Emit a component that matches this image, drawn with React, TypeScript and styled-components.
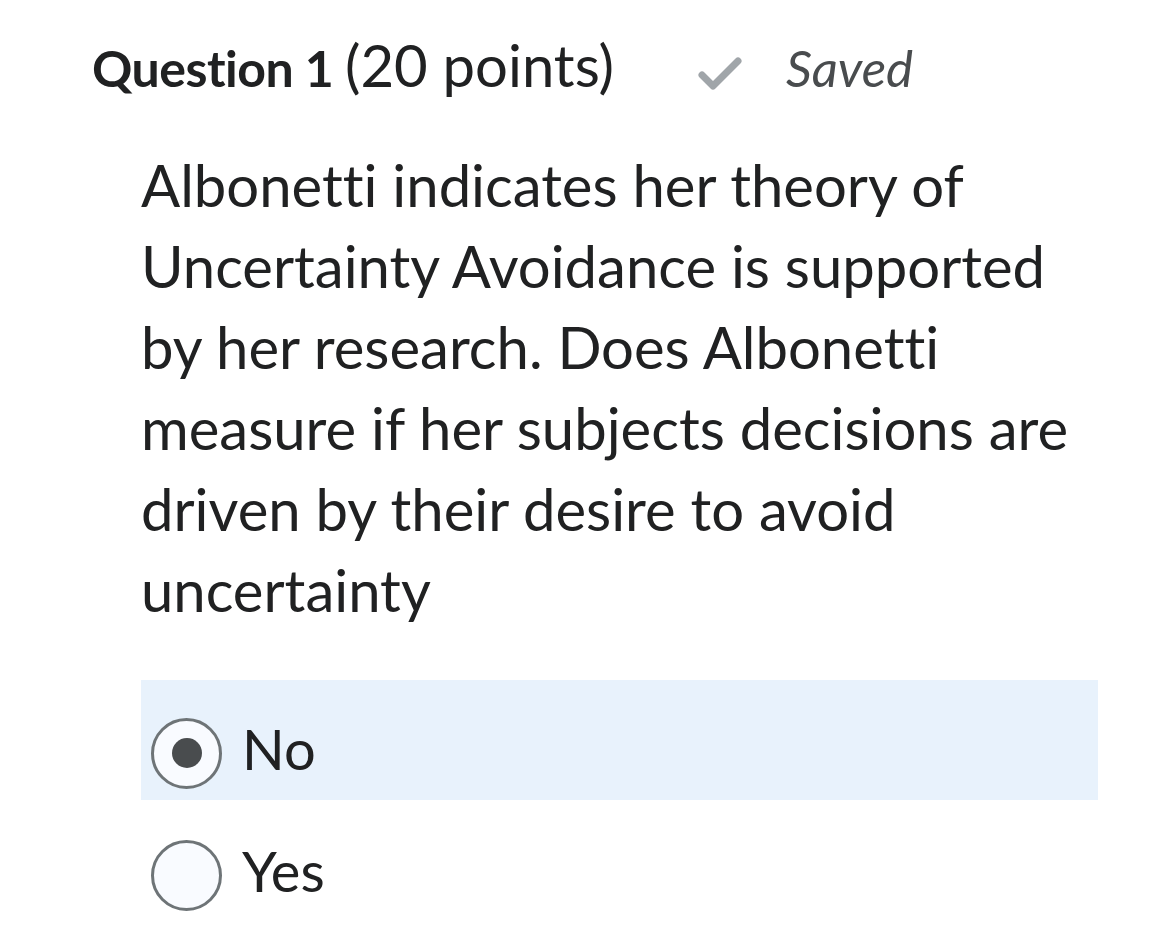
import React from 'react';
import styled, { createGlobalStyle } from 'styled-components';

const GlobalStyle = createGlobalStyle`
  html, body {
    margin: 0;
    padding: 0;
    background: #ffffff;
  }
  body {
    font-family: Lato, "Noto Sans", sans-serif;
    font-variant-ligatures: none;
    color: #202122;
  }
`;

const Page = styled.div`
  padding: 30px 0 0 92px;
  width: 1006px;
`;

const Header = styled.div`
  display: flex;
  align-items: baseline;
  height: 76px;
`;

const Title = styled.h2`
  margin: 0;
  font-size: 50px;
  font-weight: 700;
  letter-spacing: -0.5px;
  color: #202122;
  white-space: nowrap;

  span {
    font-weight: 400;
    font-size: 58px;
    letter-spacing: 0;
  }
`;

const SavedStatus = styled.div`
  display: flex;
  align-items: baseline;
  gap: 44px;
  margin-left: 84px;
  font-size: 51px;
  font-style: italic;
  color: #494c4e;

  svg {
    align-self: center;
    position: relative;
    top: 6px;
  }
`;

const Body = styled.div`
  padding-left: 49px;
`;

const Prompt = styled.p`
  margin: 38px 0 0;
  font-size: 58px;
  line-height: 81px;
  color: #202122;
`;

const Choices = styled.div`
  margin-top: 50px;
  display: flex;
  flex-direction: column;
  gap: 2px;
`;

const Choice = styled.label<{ $selected?: boolean }>`
  box-sizing: border-box;
  display: flex;
  align-items: center;
  gap: 20px;
  height: 120px;
  padding: 26px 0 0 10px;
  background: ${p => (p.$selected ? '#e8f2fc' : 'transparent')};
  font-size: 56px;
  color: #202122;
`;

const ChoiceText = styled.span`
  padding-bottom: 10px;
`;

const Radio = styled.span<{ $checked?: boolean }>`
  box-sizing: border-box;
  width: 71px;
  height: 71px;
  border-radius: 50%;
  border: 3px solid #6e7477;
  background: #f9fbff;
  display: flex;
  align-items: center;
  justify-content: center;

  &::after {
    content: '';
    display: ${p => (p.$checked ? 'block' : 'none')};
    width: 30px;
    height: 30px;
    border-radius: 50%;
    background: #494c4e;
  }
`;

const choices = [
  { id: 'no', label: 'No', selected: true },
  { id: 'yes', label: 'Yes', selected: false },
];

const App = () => (
  <>
    <GlobalStyle />
    <Page>
      <Header>
        <Title>
          Question 1 <span>(20 points)</span>
        </Title>
        <SavedStatus>
          <svg width="44" height="34" viewBox="0 0 44 34" fill="none">
            <path
              d="M4 18 L15 29 L40 4"
              stroke="#a0a5a9"
              strokeWidth="7"
              strokeLinecap="round"
              strokeLinejoin="round"
            />
          </svg>
          Saved
        </SavedStatus>
      </Header>
      <Body>
        <Prompt>
          Albonetti indicates her theory of Uncertainty Avoidance is supported by her
          research. Does Albonetti measure if her subjects decisions are driven by their
          desire to avoid uncertainty
        </Prompt>
        <Choices>
          {choices.map(c => (
            <Choice key={c.id} $selected={c.selected}>
              <Radio $checked={c.selected} />
              <ChoiceText>{c.label}</ChoiceText>
            </Choice>
          ))}
        </Choices>
      </Body>
    </Page>
  </>
);

export default App;
